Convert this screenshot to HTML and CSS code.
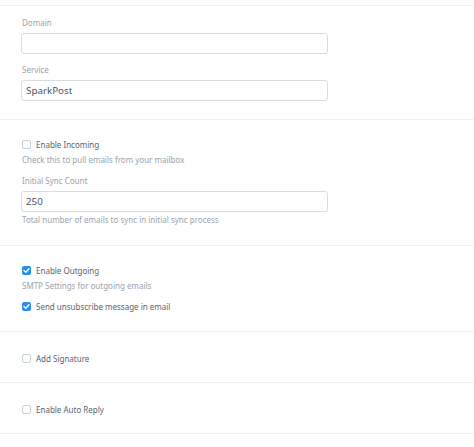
FILE: index.html
```html
<!DOCTYPE html>
<html>
<head>
<meta charset="utf-8">
<link rel="stylesheet" href="styles.css">
</head>
<body>
<div class="top"></div>

<div class="section s1">
  <div class="field">
    <div class="label">Domain</div>
    <div class="input"></div>
  </div>
  <div class="field next">
    <div class="label">Service</div>
    <div class="input">SparkPost</div>
  </div>
</div>

<div class="section s2">
  <div class="check-row">
    <span class="box"></span><span class="check-label">Enable Incoming</span>
  </div>
  <div class="desc">Check this to pull emails from your mailbox</div>
  <div class="field next2">
    <div class="label">Initial Sync Count</div>
    <div class="input">250</div>
    <div class="desc">Total number of emails to sync in initial sync process</div>
  </div>
</div>

<div class="section s3">
  <div class="check-row">
    <span class="box checked"><svg viewBox="0 0 9 9" width="9" height="9"><path d="M2 4.6 L3.8 6.3 L7 2.8" fill="none" stroke="#fff" stroke-width="1.4" stroke-linecap="round" stroke-linejoin="round"/></svg></span><span class="check-label">Enable Outgoing</span>
  </div>
  <div class="desc">SMTP Settings for outgoing emails</div>
  <div class="check-row next3">
    <span class="box checked"><svg viewBox="0 0 9 9" width="9" height="9"><path d="M2 4.6 L3.8 6.3 L7 2.8" fill="none" stroke="#fff" stroke-width="1.4" stroke-linecap="round" stroke-linejoin="round"/></svg></span><span class="check-label">Send unsubscribe message in email</span>
  </div>
</div>

<div class="section s4">
  <div class="check-row">
    <span class="box"></span><span class="check-label">Add Signature</span>
  </div>
</div>

<div class="section s5">
  <div class="check-row">
    <span class="box"></span><span class="check-label">Enable Auto Reply</span>
  </div>
</div>
</body>
</html>
```

FILE: styles.css
```css
html, body {
  margin: 0;
  padding: 0;
  background: #ffffff;
  font-family: "Noto Sans", "Open Sans", sans-serif;
}

.top {
  height: 5px;
  border-bottom: 1px solid #eef0f2;
}

.section {
  padding-left: 21px;
  border-bottom: 1px solid #eef0f2;
}

.s1 { padding-top: 9px; padding-bottom: 18px; }
.s2 { padding-top: 16px; padding-bottom: 17px; }
.s3 { padding-top: 16px; padding-bottom: 17px; }
.s4 { padding-top: 18px; padding-bottom: 16px; }
.s5 { padding-top: 18px; padding-bottom: 16px; }

.field.next { margin-top: 8px; }
.field.next2 { margin-top: 6px; }

.label {
  font-size: 8px;
  line-height: 16px;
  color: #9aa3ac;
  padding-left: 1px;
}

.input {
  box-sizing: border-box;
  width: 307px;
  height: 21px;
  margin-top: 2px;
  border: 1px solid #d8dde2;
  border-radius: 3px;
  padding-left: 4px;
  font-size: 9.8px;
  line-height: 19px;
  color: #4a5560;
}

.desc {
  font-size: 8px;
  line-height: 15px;
  color: #9aa3ac;
  padding-left: 1px;
}

.field .desc {
  line-height: 16px;
}

.check-row {
  display: flex;
  align-items: center;
  height: 16px;
}

.check-row.next3 { margin-top: 5px; }

.box {
  box-sizing: border-box;
  width: 9px;
  height: 9px;
  margin-left: 1px;
  border: 1px solid #c8cfd5;
  border-radius: 2px;
  background: #fff;
  display: flex;
}

.box.checked {
  border: none;
  background: #2490ef;
}

.check-label {
  margin-left: 5px;
  font-size: 8px;
  color: #5a6570;
}
```
